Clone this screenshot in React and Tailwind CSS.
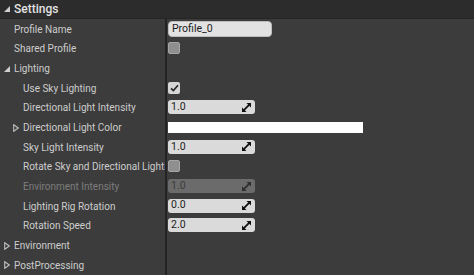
import React from 'react';

const FONT = { fontFamily: 'Roboto, "Liberation Sans", sans-serif' };

// diagonal spin handle drawn at the right end of number boxes
function SpinIcon({ dim }) {
  const c = dim ? '#2e2e2e' : '#111';
  return (
    <svg width="9" height="9" viewBox="0 0 8 8" className="shrink-0">
      <polygon points="4,0 8,0 8,4" fill={c} />
      <polygon points="0,4 0,8 4,8" fill={c} />
      <line x1="6.5" y1="1.5" x2="1.5" y2="6.5" stroke={c} strokeWidth="1.6" />
    </svg>
  );
}

function Tri({ open }) {
  return open ? (
    <svg width="6" height="6" viewBox="0 0 6 6" className="shrink-0">
      <polygon points="6,0 6,6 0,6" fill="#cfcfcf" />
    </svg>
  ) : (
    <svg width="6" height="8" viewBox="0 0 6 8" className="shrink-0">
      <polygon points="0.7,0.7 5.3,4 0.7,7.3" fill="none" stroke="#bdbdbd" strokeWidth="1.1" />
    </svg>
  );
}

function NumberBox({ value, dim }) {
  return (
    <div
      className={`flex items-center justify-between w-[87px] h-[14px] rounded-[3px] pl-[3px] pr-[4px] ${
        dim ? 'bg-[#6b6b6b] text-[#3d3d3d]' : 'bg-[#dadada] text-[#1c1c1c]'
      }`}
    >
      <span className="text-[10.5px] leading-none">{value}</span>
      <SpinIcon dim={dim} />
    </div>
  );
}

function Checkbox({ checked }) {
  return (
    <div
      className={`w-[12px] h-[12px] rounded-[2px] flex items-center justify-center ${
        checked ? 'bg-[#d6d6d6]' : 'bg-[#8f8f8f] border border-[#a5a5a5]'
      }`}
    >
      {checked && (
        <svg width="9" height="8" viewBox="0 0 9 8">
          <path d="M1 4.3 L3.4 6.6 L8 1.2" fill="none" stroke="#2a2a2a" strokeWidth="1.7" />
        </svg>
      )}
    </div>
  );
}

function Row({ label, indent = 0, tri, dim, children }) {
  return (
    <div className="flex h-[19.67px] items-center">
      <div
        className={`w-[165px] shrink-0 flex items-center gap-[4px] overflow-hidden whitespace-nowrap text-[10px] pt-[1px] ${
          dim ? 'text-[#7c7c7c]' : 'text-[#cdcdcd]'
        }`}
        style={{ paddingLeft: indent }}
      >
        {tri && <Tri open={tri === 'open'} />}
        <span>{label}</span>
      </div>
      <div className="w-[2px] self-stretch bg-[#242424]" />
      <div className="flex-1 pl-[1px] flex items-center">{children}</div>
    </div>
  );
}

export default function App() {
  return (
    <div className="w-[474px] h-[275px] bg-[#3c3c3c] overflow-hidden" style={FONT}>
      <div className="h-[19px] bg-[#2c2c2c] flex items-center gap-[4px] pl-[4px] border-b border-[#262626]">
        <Tri open />
        <span className="text-[12px] font-medium text-[#e2e2e2]">Settings</span>
      </div>
      <Row label="Profile Name" indent={14}>
        <div className="w-[104px] h-[16px] rounded-[4px] bg-[#e2e2e2] border border-[#bdbdbd] flex items-center pl-[3px] text-[10.5px] text-[#1c1c1c]">
          Profile_0
        </div>
      </Row>
      <Row label="Shared Profile" indent={14}>
        <Checkbox />
      </Row>
      <Row label="Lighting" indent={4} tri="open" />
      <Row label="Use Sky Lighting" indent={23}>
        <Checkbox checked />
      </Row>
      <Row label="Directional Light Intensity" indent={23}>
        <NumberBox value="1.0" />
      </Row>
      <Row label="Directional Light Color" indent={13} tri="closed">
        <div className="w-[195px] h-[11px] bg-white" />
      </Row>
      <Row label="Sky Light Intensity" indent={23}>
        <NumberBox value="1.0" />
      </Row>
      <Row label="Rotate Sky and Directional Lighting" indent={23}>
        <Checkbox />
      </Row>
      <Row label="Environment Intensity" indent={23} dim>
        <NumberBox value="1.0" dim />
      </Row>
      <Row label="Lighting Rig Rotation" indent={23}>
        <NumberBox value="0.0" />
      </Row>
      <Row label="Rotation Speed" indent={23}>
        <NumberBox value="2.0" />
      </Row>
      <Row label="Environment" indent={4} tri="closed" />
      <Row label="PostProcessing" indent={4} tri="closed" />
    </div>
  );
}
